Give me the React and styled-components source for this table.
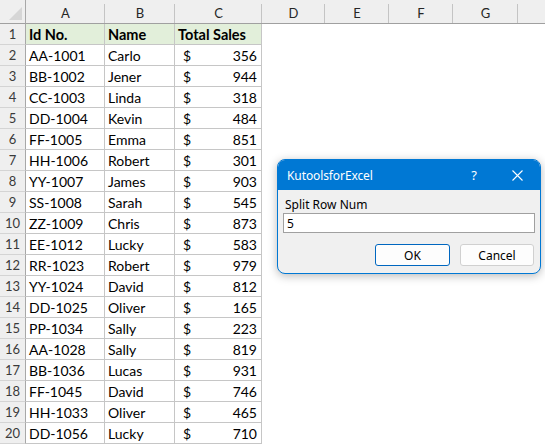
import React from "react";
import styled, { createGlobalStyle } from "styled-components";

const Global = createGlobalStyle`
  html, body { margin: 0; padding: 0; background: #fff; overflow: hidden; }
  body { font-family: "Lato", "Liberation Sans", sans-serif; }
`;

const COLS = [26, 79, 70, 87, 63, 64, 64, 65, 40];
const LETTERS = ["A", "B", "C", "D", "E", "F", "G", ""];

const data = [
  ["AA-1001", "Carlo", 356],
  ["BB-1002", "Jener", 944],
  ["CC-1003", "Linda", 318],
  ["DD-1004", "Kevin", 484],
  ["FF-1005", "Emma", 851],
  ["HH-1006", "Robert", 301],
  ["YY-1007", "James", 903],
  ["SS-1008", "Sarah", 545],
  ["ZZ-1009", "Chris", 873],
  ["EE-1012", "Lucky", 583],
  ["RR-1023", "Robert", 979],
  ["YY-1024", "David", 812],
  ["DD-1025", "Oliver", 165],
  ["PP-1034", "Sally", 223],
  ["AA-1028", "Sally", 819],
  ["BB-1036", "Lucas", 931],
  ["FF-1045", "David", 746],
  ["HH-1033", "Oliver", 465],
  ["DD-1056", "Lucky", 710],
];

const Page = styled.div`
  position: relative;
  width: 545px;
  height: 444px;
  overflow: hidden;
`;

const Sheet = styled.div`
  display: grid;
  grid-template-columns: ${COLS.map((c) => c + "px").join(" ")};
  grid-auto-rows: 21px;
  grid-template-rows: 24px;
`;

const Corner = styled.div`
  background: #efefef;
  border-right: 1px solid #a8a8a8;
  border-bottom: 1px solid #a0a0a0;
  position: relative;
  &::after {
    content: "";
    position: absolute;
    right: 3px;
    bottom: 3px;
    width: 0;
    height: 0;
    border-left: 13px solid transparent;
    border-bottom: 13px solid #d6d6d6;
  }
`;

const ColHead = styled.div`
  background: #efefef;
  border-bottom: 1px solid #a0a0a0;
  display: flex;
  align-items: center;
  justify-content: center;
  font-size: 13px;
  color: #262626;
  padding-top: 3px;
  box-sizing: border-box;
  position: relative;
  &::after {
    content: "";
    position: absolute;
    right: 0;
    top: 4px;
    bottom: 0;
    width: 1px;
    background: #c4c4c4;
  }
`;

const RowHead = styled.div`
  background: #efefef;
  border-right: 1px solid #a8a8a8;
  border-bottom: 1px solid #d4d4d4;
  display: flex;
  align-items: center;
  justify-content: center;
  font-size: 13px;
  color: #3a3a3a;
  box-sizing: border-box;
`;

const Cell = styled.div`
  box-sizing: border-box;
  border-right: 1px solid ${(p) => (p.$grid ? "#c6c6c6" : "transparent")};
  border-bottom: 1px solid ${(p) => (p.$grid ? "#c6c6c6" : "transparent")};
  background: ${(p) => (p.$head ? "#e2efda" : "#fff")};
  font-size: ${(p) => (p.$head ? "14.5px" : "14px")};
  font-weight: ${(p) => (p.$head ? 700 : 400)};
  color: #000;
  padding: 0 4px 0 3px;
  display: flex;
  align-items: center;
  justify-content: space-between;
  white-space: nowrap;
  overflow: hidden;
`;

const Dollar = styled.span`
  padding-left: 5px;
`;

const Dialog = styled.div`
  position: absolute;
  left: 277px;
  top: 159px;
  width: 264px;
  height: 115px;
  box-sizing: border-box;
  border: 1px solid #0078d4;
  border-radius: 8px;
  background: #f0f0f0;
  box-shadow: 0 2px 10px rgba(0, 0, 0, 0.28);
  overflow: hidden;
  font-family: "Noto Sans", "Open Sans", sans-serif;
  font-size: 12px;
  display: flex;
  flex-direction: column;
`;

const TitleBar = styled.div`
  background: #0078d4;
  color: #fff;
  height: 30px;
  display: flex;
  align-items: center;
  padding: 0 0 0 9px;
  flex-shrink: 0;
`;

const Title = styled.div`
  flex: 1;
  font-size: 12px;
  letter-spacing: -0.1px;
`;

const TitleBtn = styled.div`
  width: ${(p) => p.$w}px;
  display: flex;
  align-items: center;
  justify-content: center;
  font-size: 13px;
`;

const Body = styled.div`
  padding: 6px 5px 0 5px;
  display: flex;
  flex-direction: column;
`;

const Label = styled.div`
  color: #000;
  font-size: 12px;
  padding-left: 2px;
  height: 17px;
  line-height: 17px;
`;

const Input = styled.div`
  margin-top: 0;
  height: 20px;
  box-sizing: border-box;
  border: 1px solid #a0a0a0;
  background: #fff;
  font-size: 12px;
  padding-left: 3px;
  display: flex;
  align-items: center;
  width: 252px;
`;

const Buttons = styled.div`
  display: flex;
  justify-content: flex-end;
  gap: 10px;
  margin-top: 11px;
  padding-right: 1px;
`;

const Button = styled.div`
  width: ${(p) => p.$w}px;
  height: 22px;
  box-sizing: border-box;
  border: 1px solid ${(p) => (p.$primary ? "#0067c0" : "#d0d0d0")};
  border-radius: 3px;
  background: #fdfdfd;
  display: flex;
  align-items: center;
  justify-content: center;
  font-size: 12px;
  color: #000;
`;

export default function App() {
  return (
    <Page>
      <Global />
      <Sheet>
        <Corner />
        {LETTERS.map((l, i) => (
          <ColHead key={i}>{l}</ColHead>
        ))}
        <RowHead>1</RowHead>
        <Cell $grid $head>Id No.</Cell>
        <Cell $grid $head>Name</Cell>
        <Cell $grid $head>Total Sales</Cell>
        {LETTERS.slice(3).map((l, i) => (
          <Cell key={i} />
        ))}
        {data.map((r, i) => (
          <React.Fragment key={i}>
            <RowHead>{i + 2}</RowHead>
            <Cell $grid>{r[0]}</Cell>
            <Cell $grid>{r[1]}</Cell>
            <Cell $grid>
              <Dollar>$</Dollar>
              <span>{r[2]}</span>
            </Cell>
            {LETTERS.slice(3).map((l, j) => (
              <Cell key={j} />
            ))}
          </React.Fragment>
        ))}
      </Sheet>
      <Dialog>
        <TitleBar>
          <Title>KutoolsforExcel</Title>
          <TitleBtn $w={40}>?</TitleBtn>
          <TitleBtn $w={46}>
            <svg width="11" height="11" viewBox="0 0 11 11">
              <path d="M0.5 0.5 L10.5 10.5 M10.5 0.5 L0.5 10.5" stroke="#fff" strokeWidth="1.1" />
            </svg>
          </TitleBtn>
        </TitleBar>
        <Body>
          <Label>Split Row Num</Label>
          <Input>5</Input>
          <Buttons>
            <Button $primary $w={75}>OK</Button>
            <Button $w={74}>Cancel</Button>
          </Buttons>
        </Body>
      </Dialog>
    </Page>
  );
}
